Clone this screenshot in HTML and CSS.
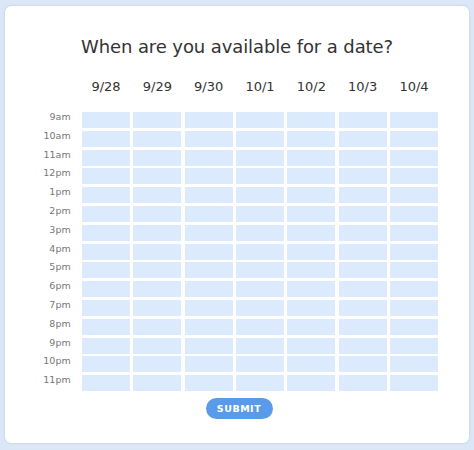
FILE: index.html
```html
<!DOCTYPE html>
<html>
<head>
<meta charset="utf-8">
<link rel="stylesheet" href="styles.css">
</head>
<body>
<div class="card">
  <h1 class="title">When are you available for a date?</h1>
  <div class="grid">
    <div class="corner"></div>
    <div class="date">9/28</div>
    <div class="date">9/29</div>
    <div class="date">9/30</div>
    <div class="date">10/1</div>
    <div class="date">10/2</div>
    <div class="date">10/3</div>
    <div class="date">10/4</div>
  </div>
  <div class="slots" id="slots"></div>
  <div class="actions"><button class="submit">SUBMIT</button></div>
</div>
<script src="app.js"></script>
</body>
</html>
```
FILE: app.js
```js
const hours = ["9am","10am","11am","12pm","1pm","2pm","3pm","4pm","5pm","6pm","7pm","8pm","9pm","10pm","11pm"];
const slots = document.getElementById("slots");
hours.forEach(h => {
  const l = document.createElement("div");
  l.className = "hour";
  l.textContent = h;
  slots.appendChild(l);
  for (let i = 0; i < 7; i++) {
    const c = document.createElement("div");
    c.className = "cell";
    slots.appendChild(c);
  }
});
```
FILE: styles.css
```css
html, body {
  margin: 0;
  padding: 0;
}
body {
  background: #dbe7f6;
  padding: 6px 5px 7px 5px;
  font-family: "DejaVu Sans", sans-serif;
}
.card {
  background: #fff;
  border-radius: 6px;
  height: 437px;
  box-sizing: border-box;
  box-shadow: 0 0 2px rgba(120, 150, 190, 0.45);
  padding-top: 29px;
}
.title {
  margin: 0;
  font-size: 18px;
  line-height: 24px;
  font-weight: normal;
  color: #333;
  text-align: center;
  letter-spacing: -0.1px;
}
.grid, .slots {
  display: grid;
  grid-template-columns: 73.7px repeat(7, 48px);
  column-gap: 3.33px;
}
.grid {
  margin-top: 18px;
  height: 35px;
}
.date {
  text-align: center;
  font-size: 13px;
  line-height: 20px;
  color: #333;
}
.slots {
  row-gap: 2.8px;
}
.hour {
  text-align: right;
  padding-right: 8px;
  font-size: 9.5px;
  line-height: 9px;
  color: #777;
}
.cell {
  height: 16px;
  background: #dbeafc;
}
.actions {
  display: flex;
  justify-content: center;
  margin-top: 7px;
}
.submit {
  width: 67px;
  height: 21px;
  border: none;
  border-radius: 11px;
  background: #5a9be9;
  color: #fff;
  font-family: "DejaVu Sans", sans-serif;
  font-weight: bold;
  font-size: 9.5px;
  letter-spacing: 0.5px;
  padding: 0;
  margin-left: 4px;
}
```
